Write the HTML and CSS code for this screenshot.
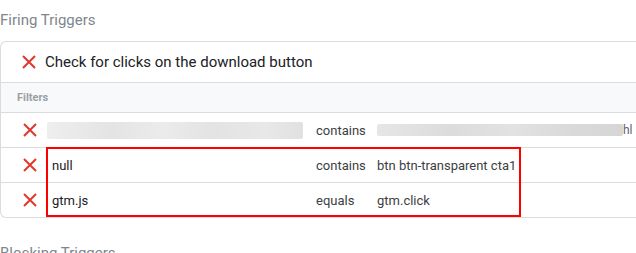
FILE: index.html
```html
<!DOCTYPE html>
<html>
<head>
<meta charset="utf-8">
<link rel="stylesheet" href="styles.css">
</head>
<body>
<div class="page">
  <div class="section-title">Firing Triggers</div>
  <div class="card">
    <div class="trigger-head">
      <span class="x-icon"><svg viewBox="0 0 14 14" width="14" height="14"><path d="M1 1 L13 13 M13 1 L1 13" stroke="#e0382b" stroke-width="2" fill="none"/></svg></span>
      <span class="trigger-name">Check for clicks on the download button</span>
    </div>
    <div class="filters-label">Filters</div>
    <div class="filter-row">
      <span class="x-icon"><svg viewBox="0 0 14 14" width="14" height="14"><path d="M1 1 L13 13 M13 1 L1 13" stroke="#e0382b" stroke-width="2" fill="none"/></svg></span>
      <span class="cell-name"><span class="blur blur-name"></span></span>
      <span class="cell-op">contains</span>
      <span class="cell-val"><span class="blur blur-val"></span><span class="tail">hl</span></span>
    </div>
    <div class="filter-row">
      <span class="x-icon"><svg viewBox="0 0 14 14" width="14" height="14"><path d="M1 1 L13 13 M13 1 L1 13" stroke="#e0382b" stroke-width="2" fill="none"/></svg></span>
      <span class="cell-name">null</span>
      <span class="cell-op">contains</span>
      <span class="cell-val">btn btn-transparent cta1</span>
    </div>
    <div class="filter-row last">
      <span class="x-icon"><svg viewBox="0 0 14 14" width="14" height="14"><path d="M1 1 L13 13 M13 1 L1 13" stroke="#e0382b" stroke-width="2" fill="none"/></svg></span>
      <span class="cell-name">gtm.js</span>
      <span class="cell-op">equals</span>
      <span class="cell-val">gtm.click</span>
    </div>
    <div class="highlight"></div>
  </div>
  <div class="section-title second">Blocking Triggers</div>
</div>
</body>
</html>
```

FILE: styles.css
```css
html, body {
  margin: 0;
  padding: 0;
  background: #ffffff;
}
.page {
  width: 636px;
  height: 253px;
  overflow: hidden;
  font-family: Roboto, "Liberation Sans", sans-serif;
  color: #202124;
}
.section-title {
  font-size: 15px;
  line-height: 20px;
  color: #80868b;
  padding-top: 10px;
  box-sizing: border-box;
  height: 41px;
}
.section-title.second {
  margin-top: 15px;
}
.card {
  position: relative;
  border: 1px solid #dadce0;
  border-right: none;
  border-radius: 6px 0 0 6px;
  box-sizing: border-box;
}
.trigger-head {
  display: flex;
  align-items: center;
  height: 41px;
  border-bottom: 1px solid #dadce0;
  box-sizing: border-box;
}
.trigger-name {
  font-size: 15px;
}
.x-icon {
  display: flex;
  justify-content: flex-end;
  box-sizing: border-box;
  padding-right: 10px;
  width: 46px;
}
.x-icon svg {
  display: block;
}
.trigger-head .x-icon {
  width: 44px;
  padding-right: 9px;
}
.filters-label {
  background: #f8f9fa;
  height: 30px;
  line-height: 29px;
  font-size: 11px;
  font-weight: bold;
  color: #9aa0a6;
  padding-left: 16px;
  border-bottom: 1px solid #dadce0;
  box-sizing: border-box;
}
.filter-row {
  display: grid;
  grid-template-columns: 46px 264px 61px 1fr;
  align-items: center;
  height: 35px;
  border-bottom: 1px solid #dadce0;
  box-sizing: border-box;
  font-size: 13px;
}
.filter-row.last {
  border-bottom: none;
  height: 34px;
}
.cell-name, .cell-op, .cell-val {
  padding-left: 5px;
  white-space: nowrap;
  color: #3c4043;
}
.cell-name {
  color: #202124;
}
.cell-val {
  display: flex;
  align-items: center;
}
.blur {
  display: block;
  border-radius: 2px;
}
.blur-name {
  width: 256px;
  height: 17px;
  margin-left: -5px;
  background: linear-gradient(90deg, #eeeeee 0%, #e4e4e4 25%, #ebebeb 45%, #e3e3e3 65%, #e8e8e8 85%, #e1e1e1 100%);
}
.blur-val {
  width: 246px;
  height: 12px;
  background: linear-gradient(90deg, #e6e6e6 0%, #dcdcdc 30%, #e2e2e2 55%, #d9d9d9 80%, #d6d6d6 100%);
}
.tail {
  color: #5f6368;
  font-size: 12px;
}
.highlight {
  position: absolute;
  left: 45px;
  top: 105px;
  width: 475px;
  height: 70px;
  border: 2px solid #ff0000;
  box-sizing: border-box;
  pointer-events: none;
}
```
